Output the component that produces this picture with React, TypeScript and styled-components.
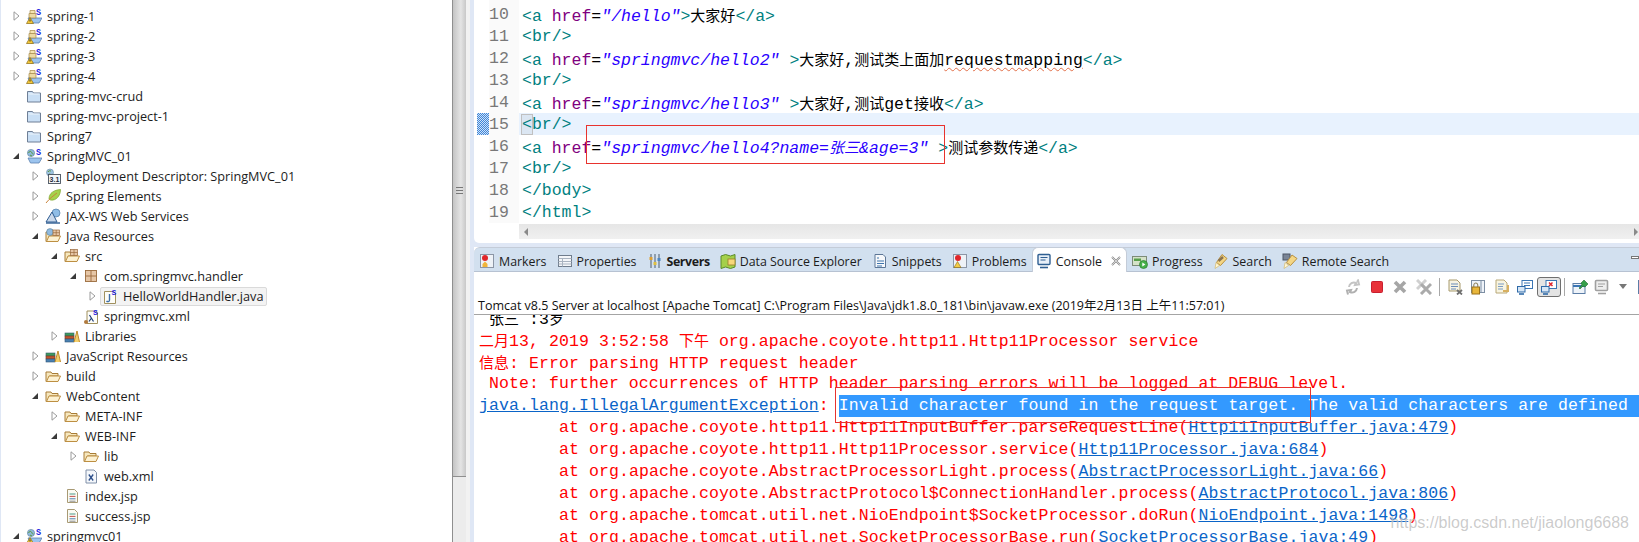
import React from "react";
import styled, { createGlobalStyle } from "styled-components";

const Global = createGlobalStyle`
  html, body { margin: 0; padding: 0; background: #fff; }
`;

const uiFont = `"Open Sans", "Noto Sans CJK SC", sans-serif`;
const monoFont = `"Liberation Mono", "Noto Sans CJK SC", monospace`;

const Screen = styled.div`
  display: flex;
  width: 1639px;
  height: 542px;
  overflow: hidden;
  position: relative;
  background: #fff;
  font-family: ${uiFont};
  font-size: 12px;
  color: #1c1c1c;
`;

/* ---------- project explorer ---------- */
const TreePanel = styled.div`
  width: 452px;
  flex: none;
  padding-top: 6px;
  font-size: 12.7px;
  box-shadow: inset 1px 0 0 #dfe7f5;
`;
const Row = styled.div<{ $level: number }>`
  display: flex;
  align-items: center;
  height: 20px;
  padding-left: ${(p) => 10 + p.$level * 19}px;
`;
const Arrow = styled.span`
  display: flex;
  align-items: center;
  justify-content: center;
  width: 12px;
  height: 12px;
  margin-right: 4px;
  flex: none;
`;
const RowBody = styled.div<{ $selected?: boolean }>`
  display: flex;
  align-items: center;
  height: 19px;
  white-space: nowrap;
  box-sizing: border-box;
  ${(p) =>
    p.$selected &&
    `
    margin-left: -2px;
    padding: 0 3px 0 1px;
    background: #f3f3f3;
    border: 1px solid #dadada;
    border-radius: 2px;
  `}
`;
const RowLabel = styled.span`
  margin-left: 5px;
`;
const IconBox = styled.svg`
  width: 16px;
  height: 16px;
  flex: none;
  display: block;
`;
const TreeScroll = styled.div`
  width: 14px;
  flex: none;
  display: flex;
  flex-direction: column;
  border-left: 1px solid #8f8f8f;
  box-sizing: border-box;
`;
const TreeThumb = styled.div`
  height: 477px;
  display: flex;
  flex-direction: column;
  align-items: center;
  padding-top: 187px;
  box-sizing: border-box;
  background: linear-gradient(to right, #c4c4c4, #e4e4e4 60%, #c8c8c8);
  border-bottom: 1px solid #8f8f8f;
`;
const Grip = styled.div`
  width: 7px;
  height: 7px;
  background: repeating-linear-gradient(to bottom, #777 0 1px, transparent 1px 3px);
`;
const TreeTrackRest = styled.div`
  flex: 1;
  background: #ececec;
`;
const Sash = styled.div`
  width: 8px;
  flex: none;
  background: linear-gradient(to right, #f2f2f2 0 4px, #dfe7f5 4px);
`;

/* ---------- right column ---------- */
const Workbench = styled.div`
  flex: 1;
  min-width: 0;
  display: flex;
  flex-direction: column;
  background: #dfe7f5;
`;
const EditorPane = styled.div`
  height: 243px;
  flex: none;
  background: #fff;
  border-bottom-left-radius: 5px;
  overflow: hidden;
  display: flex;
  flex-direction: column;
`;
const CodeArea = styled.div`
  height: 224px;
  flex: none;
  overflow: hidden;
`;
const CodeLines = styled.div`
  margin-top: -19px;
  font-family: ${monoFont};
  font-size: 16.5px;
  line-height: 22px;
`;
const CodeRow = styled.div`
  display: flex;
  height: 22px;
`;
const Marker = styled.span<{ $on?: boolean }>`
  width: 12px;
  margin-left: 3px;
  flex: none;
  ${(p) =>
    p.$on &&
    `
    background-color: #7fb0e8;
    background-image: repeating-conic-gradient(#3f86d8 0 25%, #cfe2f8 0 50%);
    background-size: 2px 2px;
  `}
`;
const LineNo = styled.span`
  width: 30px;
  height: 22px;
  padding-top: 1px;
  box-sizing: border-box;
  flex: none;
  color: #787878;
  background: #fafafa;
`;
const CodeText = styled.div<{ $active?: boolean }>`
  flex: 1;
  height: 22px;
  padding: 1px 0 0 3px;
  box-sizing: border-box;
  white-space: pre;
  color: #000;
  background: ${(p) => (p.$active ? "#e8f2fe" : "transparent")};
`;
const Tag = styled.span`
  color: #008080;
`;
const BracketMatch = styled.span`
  color: #008080;
  outline: 1px solid #c0c0c0;
  background: #dbe6f2;
`;
const Attr = styled.span`
  color: #7f007f;
`;
const Str = styled.span`
  color: #2a00ff;
  font-style: italic;
`;
const Cjk = styled.span`
  font-family: "Noto Sans CJK SC", sans-serif;
  font-size: 15px;
  letter-spacing: 0;
`;
const Squiggle = styled.span`
  text-decoration: underline wavy #e2704a 1px;
  text-underline-offset: 2px;
`;
const HScroll = styled.div`
  height: 15px;
  margin-left: 45px;
  flex: none;
  background: linear-gradient(to bottom, #e6e6e6, #f0f0f0);
  display: flex;
  align-items: center;
  justify-content: space-between;
  padding: 0 1px 0 5px;
`;
const ScrollArrow = styled.span<{ $dir: "left" | "right" }>`
  width: 0;
  height: 0;
  border-top: 4px solid transparent;
  border-bottom: 4px solid transparent;
  ${(p) =>
    p.$dir === "left" ? "border-right: 4px solid #8a8a8a;" : "border-left: 4px solid #8a8a8a;"}
`;

const PaneGap = styled.div`
  height: 4px;
  flex: none;
`;
const ConsolePane = styled.div`
  flex: 1;
  min-height: 0;
  display: flex;
  flex-direction: column;
  background: #fff;
  overflow: hidden;
`;
const TabBar = styled.div`
  height: 25px;
  flex: none;
  display: flex;
  align-items: stretch;
  background: #d2e0ef;
  border-top: 1px solid #c4ccd8;
  border-bottom: 1px solid #b7c2d2;
  border-top-left-radius: 6px;
  box-sizing: border-box;
  position: relative;
  font-size: 12.4px;
`;
const Tab = styled.div<{ $active?: boolean; $bold?: boolean }>`
  display: flex;
  align-items: center;
  gap: 4px;
  padding: 3px 5px 0;
  white-space: nowrap;
  font-weight: ${(p) => (p.$bold ? 700 : 400)};
  letter-spacing: ${(p) => (p.$bold ? "-0.4px" : "0")};
  ${(p) =>
    p.$active &&
    `
    background: #fff;
    border: 1px solid #c4ccd8;
    border-bottom: none;
    border-radius: 6px 6px 0 0;
    margin: -1px 0 -1px 0;
    padding: 3px 5px 1px 3px;
  `}
`;
const TabClose = styled.span`
  margin-left: 5px;
  width: 10px;
  height: 10px;
  display: flex;
`;
const Minimize = styled.span`
  position: absolute;
  right: 0;
  top: 8px;
  width: 8px;
  height: 3px;
  background: #fff;
  border: 1px solid #777;
  box-sizing: border-box;
`;
const Toolbar = styled.div`
  height: 25px;
  padding-top: 4px;
  box-sizing: border-box;
  flex: none;
  display: flex;
  align-items: center;
  justify-content: flex-end;
  margin-right: -18px;
`;
const ToolSlot = styled.span<{ $w?: number; $on?: boolean }>`
  width: ${(p) => p.$w ?? 23.6}px;
  height: 20px;
  flex: none;
  display: flex;
  align-items: center;
  justify-content: center;
  box-sizing: border-box;
  ${(p) =>
    p.$on &&
    `
    background: #e4e4e4;
    border: 1px solid #6f6f6f;
    border-radius: 3px;
  `}
`;
const ToolSep = styled.span`
  width: 1px;
  height: 18px;
  margin: 0 3px;
  flex: none;
  background: #a8a8a8;
`;
const ConsoleTitle = styled.div`
  height: 17px;
  line-height: 17px;
  font-size: 12.5px;
  flex: none;
  padding-left: 4px;
  color: #111;
  white-space: nowrap;
  border-bottom: 1px solid #a4a4a4;
`;
const ConsoleBody = styled.div`
  flex: 1;
  overflow: hidden;
`;
const ConsoleLines = styled.div`
  margin-top: -8px;
  padding-left: 5px;
  font-family: ${monoFont};
  font-size: 16.5px;
  letter-spacing: 0.09px;
  line-height: 22px;
  color: #ff0000;
  white-space: pre;
`;
const ConsoleLine = styled.div<{ $plain?: boolean }>`
  height: 22px;
  color: ${(p) => (p.$plain ? "#000" : "#ff0000")};
`;
const Trace = styled.span`
  padding-left: 80px;
`;
const JavaLink = styled.span`
  color: #0a64c8;
  text-decoration: underline;
`;
const Selected = styled.span`
  display: inline-block;
  width: 900px;
  height: 22px;
  background: #3399ff;
  color: #fff;
`;

/* ---------- overlays ---------- */
const RedBox = styled.div<{ $x: number; $y: number; $w: number; $h: number }>`
  position: absolute;
  left: ${(p) => p.$x}px;
  top: ${(p) => p.$y}px;
  width: ${(p) => p.$w}px;
  height: ${(p) => p.$h}px;
  border: 1px solid #e8332e;
  box-sizing: border-box;
  pointer-events: none;
`;
const Watermark = styled.div`
  position: absolute;
  right: 10px;
  top: 513px;
  font-family: "Liberation Sans", sans-serif;
  font-size: 16px;
  line-height: 20px;
  color: rgba(130, 130, 130, 0.42);
  text-shadow: 0 0 1px rgba(255, 255, 255, 0.7);
`;

/* ---------- icons ---------- */
const OpenFolder = () => (
  <>
    <path d="M1 4h5l1 1.5h6V8H4.5L2.5 13.5H1z" fill="#f6e7bd" stroke="#a87c36" />
    <path d="M4 8h11.5L13 13.5H1.5z" fill="#fcf1d2" stroke="#bd8f42" />
  </>
);
const SBadge = () => (
  <text x="10" y="7" fontSize="8.5" fontWeight="700" fontFamily="Liberation Mono, monospace" fill="#1a1ae0">
    S
  </text>
);
const Warn = () => (
  <>
    <path d="M4 9.5L7.5 15.5H0.5z" fill="#f5c93a" stroke="#8a6a10" strokeWidth="0.7" />
    <path d="M4 11.5v2" stroke="#222" strokeWidth="0.9" />
  </>
);
const BlueTray = () => <path d="M2 10h14l-3 5H4.5z" fill="#9cc4ee" stroke="#5b82b0" strokeWidth="0.8" />;
const Globe = () => (
  <>
    <circle cx="5" cy="5" r="3.6" fill="#8fbadf" stroke="#5b7f99" strokeWidth="0.6" />
    <path d="M2.5 5c1-2 2-2 3-1s0 2 2 2M4 7l2 1" stroke="#5d9a3c" strokeWidth="1" fill="none" />
  </>
);
const Crate = () => (
  <g stroke="#9a6a3c" strokeWidth="0.9" fill="#e9c9a4">
    <rect x="2.5" y="2.5" width="11" height="11" fill="#e6c6a6" />
    <path d="M2.5 8h11M8 2.5v11" />
  </g>
);
const Books = () => (
  <>
    <rect x="1" y="5" width="9" height="3" fill="#3c9a5c" stroke="#3a5f6e" strokeWidth="0.6" />
    <rect x="1" y="8" width="9" height="3" fill="#c0552c" stroke="#6e3a2a" strokeWidth="0.6" />
    <rect x="1" y="11" width="9" height="3" fill="#4a80b0" stroke="#2e5578" strokeWidth="0.6" />
    <path d="M10 14l3-11 2.5 11" fill="#f3cf6b" stroke="#c08a2a" />
  </>
);
const DocSheet = ({ lines }: { lines: string[] }) => (
  <>
    <path d="M3.5 1.5h7l3 3v10h-10z" fill="#fbfbf4" stroke="#a89a74" />
    {lines.map((c, i) => (
      <path key={i} d={`M5.5 ${6 + i * 2.4}h6`} stroke={c} strokeWidth="1" />
    ))}
  </>
);

const treeArt: Record<string, React.ReactNode> = {
  springWarn: (
    <>
      <path d="M4 2.5h5v3H4z" fill="#f4e3b0" stroke="#a88a4a" strokeWidth="0.7" />
      <BlueTray />
      <path d="M3 5.5h7v4.5H3z" fill="#ecd9a4" stroke="#a88a4a" strokeWidth="0.7" />
      <SBadge />
      <Warn />
    </>
  ),
  springWeb: (
    <>
      <Globe />
      <BlueTray />
      <SBadge />
    </>
  ),
  webWarn: (
    <>
      <Globe />
      <BlueTray />
      <SBadge />
      <Warn />
    </>
  ),
  closed: (
    <>
      <path d="M1.5 3.5h5l1 1.5h7v9h-13z" fill="#c9dff5" stroke="#6f7f96" />
      <path d="M2.5 6h11" stroke="#eef5fc" />
    </>
  ),
  descriptor: (
    <>
      <circle cx="5" cy="4.5" r="3.5" fill="#9cc2e0" stroke="#6a8ca4" strokeWidth="0.6" />
      <path d="M3 4c1-2 2-1 3-1M4 6l2 .5" stroke="#5d9a3c" strokeWidth="1" fill="none" />
      <rect x="3.5" y="6.5" width="12" height="9" fill="#f4f6f9" stroke="#46505c" strokeWidth="0.9" />
      <text x="4.6" y="14" fontSize="7" fontWeight="700" fontFamily="Liberation Sans, sans-serif" fill="#1d2b3a">
        3.1
      </text>
    </>
  ),
  leaf: (
    <>
      <path d="M4 11C4 5 9 2 15.5 1.5 15.5 8 11 13 5.5 12z" fill="#a6d24a" stroke="#7ea82e" strokeWidth="0.7" />
      <path d="M1 15C4 11 8 8 12 5" stroke="#c9843a" strokeWidth="1" fill="none" />
    </>
  ),
  jaxws: (
    <>
      <circle cx="11" cy="5" r="4" fill="#8fbde6" stroke="#4d7ba6" strokeWidth="0.7" />
      <path d="M1 14L7 4l5 10z" fill="#c9d8ea" stroke="#2f5d92" />
      <path d="M1 15h14" stroke="#2f5d92" strokeWidth="1.4" />
    </>
  ),
  javaRes: (
    <>
      <OpenFolder />
      <circle cx="5" cy="4" r="3.4" fill="#8fbadf" stroke="#5b7f99" strokeWidth="0.6" />
      <g stroke="#9a6a3c" strokeWidth="0.7" fill="#e6c6a6">
        <rect x="8" y="2" width="6.5" height="5.5" />
        <path d="M8 4.7h6.5M11.2 2v5.5" />
      </g>
    </>
  ),
  src: (
    <>
      <OpenFolder />
      <g stroke="#9a6a3c" strokeWidth="0.7" fill="#e6c6a6">
        <rect x="6.5" y="1.5" width="7" height="6" />
        <path d="M6.5 4.5h7M10 1.5v6" />
      </g>
    </>
  ),
  pkg: <Crate />,
  java: (
    <>
      <path d="M2.5 3.5h9l2 2v10h-11z" fill="#fdfdf8" stroke="#a0905e" />
      <path d="M7.5 6v6c0 2-2 2-3 1" stroke="#3c6ea8" strokeWidth="1.4" fill="none" />
      <text x="9.5" y="6.5" fontSize="8" fontWeight="700" fontFamily="Liberation Mono, monospace" fill="#1a1ae0">
        S
      </text>
    </>
  ),
  springXml: (
    <>
      <path d="M4 3h9l1.5 1.5v11H4z" fill="#fdfdf8" stroke="#a0905e" />
      <path d="M6.5 7l4 6.5M8.5 10l-2.5 3.5" stroke="#1d3c78" strokeWidth="1.2" fill="none" />
      <circle cx="3" cy="14" r="2" fill="#b07a3e" />
      <text x="10" y="6.5" fontSize="8" fontWeight="700" fontFamily="Liberation Mono, monospace" fill="#1a1ae0">
        S
      </text>
    </>
  ),
  libs: <Books />,
  folder: <OpenFolder />,
  xml: (
    <>
      <path d="M3 2h8l2.5 2.5V15H3z" fill="#f4f7fb" stroke="#8090a8" />
      <path d="M5.8 6.5l4.4 6M10.2 6.5l-4.4 6" stroke="#2d4f8a" strokeWidth="1.3" />
    </>
  ),
  jsp: <DocSheet lines={["#4d9a8a", "#c05050", "#4d7fb0", "#8a8a8a"]} />,
};

const ClosedArrow = () => (
  <svg width="7" height="10" viewBox="0 0 7 10">
    <path d="M1 .8L6 5 1 9.2z" fill="#fff" stroke="#9a9a9a" />
  </svg>
);
const OpenArrow = () => (
  <svg width="8" height="8" viewBox="0 0 8 8">
    <path d="M7 1v6H1z" fill="#3a3a3a" />
  </svg>
);

type TreeItem = {
  label: string;
  level: number;
  icon: string;
  arrow?: "open" | "closed";
  selected?: boolean;
};

const treeItems: TreeItem[] = [
  { label: "spring-1", level: 0, icon: "springWarn", arrow: "closed" },
  { label: "spring-2", level: 0, icon: "springWarn", arrow: "closed" },
  { label: "spring-3", level: 0, icon: "springWarn", arrow: "closed" },
  { label: "spring-4", level: 0, icon: "springWarn", arrow: "closed" },
  { label: "spring-mvc-crud", level: 0, icon: "closed" },
  { label: "spring-mvc-project-1", level: 0, icon: "closed" },
  { label: "Spring7", level: 0, icon: "closed" },
  { label: "SpringMVC_01", level: 0, icon: "springWeb", arrow: "open" },
  { label: "Deployment Descriptor: SpringMVC_01", level: 1, icon: "descriptor", arrow: "closed" },
  { label: "Spring Elements", level: 1, icon: "leaf", arrow: "closed" },
  { label: "JAX-WS Web Services", level: 1, icon: "jaxws", arrow: "closed" },
  { label: "Java Resources", level: 1, icon: "javaRes", arrow: "open" },
  { label: "src", level: 2, icon: "src", arrow: "open" },
  { label: "com.springmvc.handler", level: 3, icon: "pkg", arrow: "open" },
  { label: "HelloWorldHandler.java", level: 4, icon: "java", arrow: "closed", selected: true },
  { label: "springmvc.xml", level: 3, icon: "springXml" },
  { label: "Libraries", level: 2, icon: "libs", arrow: "closed" },
  { label: "JavaScript Resources", level: 1, icon: "libs", arrow: "closed" },
  { label: "build", level: 1, icon: "folder", arrow: "closed" },
  { label: "WebContent", level: 1, icon: "folder", arrow: "open" },
  { label: "META-INF", level: 2, icon: "folder", arrow: "closed" },
  { label: "WEB-INF", level: 2, icon: "folder", arrow: "open" },
  { label: "lib", level: 3, icon: "folder", arrow: "closed" },
  { label: "web.xml", level: 3, icon: "xml" },
  { label: "index.jsp", level: 2, icon: "jsp" },
  { label: "success.jsp", level: 2, icon: "jsp" },
  { label: "springmvc01", level: 0, icon: "webWarn", arrow: "open" },
];

const tabArt: Record<string, React.ReactNode> = {
  markers: (
    <>
      <rect x="1.5" y="1.5" width="13" height="13" fill="#eef2f7" stroke="#8c96a6" />
      <circle cx="6" cy="5" r="3" fill="#e0262a" />
      <path d="M3.5 14V11l2.5-2.5L8.5 11v3z" fill="#f0b43a" />
    </>
  ),
  properties: (
    <>
      <rect x="1.5" y="2.5" width="13" height="11" fill="#f4f6f9" stroke="#6f7c8c" />
      <path d="M1.5 5.5h13M1.5 8.5h13M1.5 11h13M5.5 5.5v8" stroke="#a9b3c0" />
    </>
  ),
  servers: (
    <>
      <path d="M4 1v14M8 1v14M12 1v14" stroke="#4c5c6c" />
      <rect x="2.5" y="4" width="3" height="3" fill="#e0a030" />
      <rect x="6.5" y="9" width="3" height="3" fill="#e0c040" />
      <rect x="10.5" y="5" width="3" height="3" fill="#4d86c0" />
    </>
  ),
  datasource: (
    <>
      <path d="M1 3l4.5-1.5L10.5 3 15 1.5V14l-4.5 1.5L5.5 14 1 15.5z" fill="#a4d04a" stroke="#5a8a2a" />
      <rect x="8" y="6" width="7" height="6" fill="#f7d87a" stroke="#9a7a2a" strokeWidth="0.8" />
    </>
  ),
  snippets: (
    <>
      <path d="M3 1.5h8l2.5 2.5v10.5H3z" fill="#f6f8fb" stroke="#5c7696" />
      <path d="M5 5h2M5 8h7M5 10.5h7M5 13h5" stroke="#3f74ab" />
    </>
  ),
  problems: (
    <>
      <rect x="1.5" y="1.5" width="13" height="13" fill="#eef2f7" stroke="#8c96a6" />
      <circle cx="6" cy="5" r="3" fill="#e0262a" />
      <path d="M5.5 8.5L9 14.5H2z" fill="#f3cc46" stroke="#8a6a10" strokeWidth="0.6" />
    </>
  ),
  console: (
    <>
      <rect x="2" y="1.5" width="12" height="10" rx="1" fill="#e7eff8" stroke="#2f5f92" strokeWidth="1.4" />
      <path d="M4.5 4.5h7M4.5 7h5" stroke="#2f5f92" />
      <path d="M4 14.5h8" stroke="#2f5f92" strokeWidth="1.6" />
    </>
  ),
  progress: (
    <>
      <rect x="0.5" y="3.5" width="14" height="9" fill="#d4e2c8" stroke="#7d8c78" />
      <rect x="2" y="5.5" width="7" height="2.5" fill="#58a04a" />
      <circle cx="11.5" cy="11.5" r="4" fill="#46b04a" stroke="#2f7d32" strokeWidth="0.7" />
      <path d="M10.3 9.5v4l3-2z" fill="#fff" />
    </>
  ),
  search: (
    <>
      <path d="M9 1.5l5 4-6.5 7-4-3z" fill="#f4d685" stroke="#b89040" />
      <path d="M5.5 8L10 4" stroke="#8a7350" strokeWidth="2.4" />
      <path d="M3 9.5l3.5 3L2 15.5z" fill="#fff6d2" stroke="#d0b060" strokeWidth="0.6" />
    </>
  ),
  remote: (
    <>
      <rect x="1" y="1" width="7" height="6" fill="#7a8596" stroke="#4c5666" />
      <path d="M10 2l5 3.5-6.5 7-4-3z" fill="#f4d685" stroke="#b89040" />
      <path d="M3 9.5l3.5 3L2 15.5z" fill="#fff6d2" stroke="#d0b060" strokeWidth="0.6" />
    </>
  ),
};

const toolArt: Record<string, React.ReactNode> = {
  sync: (
    <>
      <path d="M4 8a5 5 0 0 1 7-4l-1 2 4-.5-1-4-1 1.5" fill="none" stroke="#c4c4c4" strokeWidth="2" />
      <path d="M12 9a5 5 0 0 1-7 4l1-2-4 .5 1 4" fill="none" stroke="#b0b0b0" strokeWidth="2" />
    </>
  ),
  stop: <rect x="2.5" y="2.5" width="11" height="11" rx="1" fill="#e8323a" stroke="#c82030" />,
  remove: <path d="M3 3l10 10M13 3L3 13" stroke="#a6a6a6" strokeWidth="3.6" />,
  removeAll: (
    <>
      <path d="M1 1l9 9M10 1l-9 9" stroke="#d0d0d0" strokeWidth="3" />
      <path d="M5 5l10 10M15 5L5 15" stroke="#aaaaaa" strokeWidth="3" />
    </>
  ),
  clear: (
    <>
      <path d="M2 1h8l3 3v8H2z" fill="#f6f4e4" stroke="#a89a6c" />
      <path d="M4 5h7M4 7.5h7M4 10h5" stroke="#6b8db8" />
      <path d="M10 11l5 4.5M15 11l-5 4.5" stroke="#707070" strokeWidth="1.8" />
    </>
  ),
  lock: (
    <>
      <rect x="1.5" y="1.5" width="13" height="12" fill="#eef3f9" stroke="#7d8ea3" />
      <path d="M11 1.5v12" stroke="#7d8ea3" />
      <rect x="2" y="8" width="7.5" height="7" fill="#e8b63a" stroke="#9a7018" />
      <path d="M3.8 8V6a2 2 0 0 1 4 0v2" fill="none" stroke="#8a7a50" />
    </>
  ),
  word: (
    <>
      <path d="M2 1h8l3 3v10H2z" fill="#f8f4e0" stroke="#b8a878" />
      <path d="M4 5h6M4 7.5h5M4 10h5" stroke="#7a9cc4" />
      <path d="M9 12h5V6" fill="none" stroke="#d8b060" strokeWidth="2" />
    </>
  ),
  stdout: (
    <>
      <rect x="5" y="1.5" width="10.5" height="8" fill="#fff" stroke="#3c76b4" />
      <path d="M7 4h6M7 6.5h6" stroke="#3c76b4" />
      <rect x="0.5" y="7.5" width="7.5" height="5.5" fill="#d6e6f6" stroke="#2f6aa8" />
      <path d="M2 15h5" stroke="#2f6aa8" strokeWidth="1.6" />
    </>
  ),
  stderr: (
    <>
      <rect x="5" y="1.5" width="10.5" height="8" fill="#fff" stroke="#3c76b4" />
      <path d="M8 3.5l3.5 3.5M11.5 3.5L8 7" stroke="#e02830" strokeWidth="1.5" />
      <rect x="0.5" y="7.5" width="7.5" height="5.5" fill="#d6e6f6" stroke="#2f6aa8" />
      <path d="M2 15h5" stroke="#2f6aa8" strokeWidth="1.6" />
    </>
  ),
  pin: (
    <>
      <rect x="1" y="4.5" width="12" height="10" fill="#eef3f9" stroke="#5b7da6" />
      <path d="M1 7h12" stroke="#3c76b4" strokeWidth="2" />
      <path d="M7 9l3-3-1-2 3-3 4 4-3 3-2-1-3 3z" fill="#35a04a" stroke="#206a30" strokeWidth="0.6" />
    </>
  ),
  monitor: (
    <>
      <rect x="1.5" y="1.5" width="12" height="10" rx="1" fill="#eeeeee" stroke="#a0a0a0" strokeWidth="1.6" />
      <path d="M4 5h7M4 7.5h5" stroke="#a0a0a0" />
      <path d="M4 14.5h8" stroke="#a0a0a0" strokeWidth="1.6" />
    </>
  ),
  doc: <rect x="1.5" y="1.5" width="13" height="13" fill="#f4e9c4" stroke="#5b7da6" />,
};

const Icon = ({ art }: { art: React.ReactNode }) => <IconBox viewBox="0 0 16 16">{art}</IconBox>;

const tabs = [
  { key: "markers", label: "Markers" },
  { key: "properties", label: "Properties" },
  { key: "servers", label: "Servers", bold: true },
  { key: "datasource", label: "Data Source Explorer" },
  { key: "snippets", label: "Snippets" },
  { key: "problems", label: "Problems" },
  { key: "console", label: "Console", active: true },
  { key: "progress", label: "Progress" },
  { key: "search", label: "Search" },
  { key: "remote", label: "Remote Search" },
];

const T = ({ children }: { children: React.ReactNode }) => <Tag>{children}</Tag>;

const codeLines: { no: number; active?: boolean; body: React.ReactNode }[] = [
  { no: 9, body: <T>&lt;body&gt;</T> },
  {
    no: 10,
    body: (
      <>
        <T>&lt;a </T><Attr>href</Attr>=<Str>"/hello"</Str><T>&gt;</T><Cjk>大家好</Cjk><T>&lt;/a&gt;</T>
      </>
    ),
  },
  { no: 11, body: <T>&lt;br/&gt;</T> },
  {
    no: 12,
    body: (
      <>
        <T>&lt;a </T><Attr>href</Attr>=<Str>"springmvc/hello2"</Str> <T>&gt;</T><Cjk>大家好</Cjk>,<Cjk>测试类上面加</Cjk>
        <Squiggle>requestmapping</Squiggle><T>&lt;/a&gt;</T>
      </>
    ),
  },
  { no: 13, body: <T>&lt;br/&gt;</T> },
  {
    no: 14,
    body: (
      <>
        <T>&lt;a </T><Attr>href</Attr>=<Str>"springmvc/hello3"</Str> <T>&gt;</T><Cjk>大家好</Cjk>,<Cjk>测试</Cjk>get<Cjk>接收</Cjk>
        <T>&lt;/a&gt;</T>
      </>
    ),
  },
  {
    no: 15,
    active: true,
    body: (
      <>
        <BracketMatch>&lt;</BracketMatch><T>br/&gt;</T>
      </>
    ),
  },
  {
    no: 16,
    body: (
      <>
        <T>&lt;a </T><Attr>href</Attr>=<Str>"springmvc/hello4?name=<Cjk>张三</Cjk>&amp;age=3"</Str> <T>&gt;</T><Cjk>测试参数传递</Cjk>
        <T>&lt;/a&gt;</T>
      </>
    ),
  },
  { no: 17, body: <T>&lt;br/&gt;</T> },
  { no: 18, body: <T>&lt;/body&gt;</T> },
  { no: 19, body: <T>&lt;/html&gt;</T> },
];

const traces: [string, string][] = [
  ["org.apache.coyote.http11.Http11InputBuffer.parseRequestLine", "Http11InputBuffer.java:479"],
  ["org.apache.coyote.http11.Http11Processor.service", "Http11Processor.java:684"],
  ["org.apache.coyote.AbstractProcessorLight.process", "AbstractProcessorLight.java:66"],
  ["org.apache.coyote.AbstractProtocol$ConnectionHandler.process", "AbstractProtocol.java:806"],
  ["org.apache.tomcat.util.net.NioEndpoint$SocketProcessor.doRun", "NioEndpoint.java:1498"],
  ["org.apache.tomcat.util.net.SocketProcessorBase.run", "SocketProcessorBase.java:49"],
];

const App = () => (
  <Screen>
    <Global />
    <TreePanel>
      {treeItems.map((item) => (
        <Row key={item.label} $level={item.level}>
          <Arrow>
            {item.arrow === "closed" && <ClosedArrow />}
            {item.arrow === "open" && <OpenArrow />}
          </Arrow>
          <RowBody $selected={item.selected}>
            <Icon art={treeArt[item.icon]} />
            <RowLabel>{item.label}</RowLabel>
          </RowBody>
        </Row>
      ))}
    </TreePanel>
    <TreeScroll>
      <TreeThumb>
        <Grip />
      </TreeThumb>
      <TreeTrackRest />
    </TreeScroll>
    <Sash />
    <Workbench>
      <EditorPane>
        <CodeArea>
          <CodeLines>
            {codeLines.map((line) => (
              <CodeRow key={line.no}>
                <Marker $on={line.active} />
                <LineNo>{line.no}</LineNo>
                <CodeText $active={line.active}>{line.body}</CodeText>
              </CodeRow>
            ))}
          </CodeLines>
        </CodeArea>
        <HScroll>
          <ScrollArrow $dir="left" />
          <ScrollArrow $dir="right" />
        </HScroll>
      </EditorPane>
      <PaneGap />
      <ConsolePane>
        <TabBar>
          {tabs.map((tab) => (
            <Tab key={tab.key} $active={tab.active} $bold={tab.bold}>
              <Icon art={tabArt[tab.key]} />
              {tab.label}
              {tab.active && (
                <TabClose>
                  <svg width="10" height="10" viewBox="0 0 10 10">
                    <path d="M1 1l8 8M9 1L1 9" stroke="#8a8a8a" strokeWidth="1.8" />
                    <path d="M1 1l8 8M9 1L1 9" stroke="#fff" strokeWidth="0.6" />
                  </svg>
                </TabClose>
              )}
            </Tab>
          ))}
          <Minimize />
        </TabBar>
        <Toolbar>
          <ToolSlot><Icon art={toolArt.sync} /></ToolSlot>
          <ToolSlot><Icon art={toolArt.stop} /></ToolSlot>
          <ToolSlot><Icon art={toolArt.remove} /></ToolSlot>
          <ToolSlot><Icon art={toolArt.removeAll} /></ToolSlot>
          <ToolSep />
          <ToolSlot><Icon art={toolArt.clear} /></ToolSlot>
          <ToolSlot><Icon art={toolArt.lock} /></ToolSlot>
          <ToolSlot><Icon art={toolArt.word} /></ToolSlot>
          <ToolSlot><Icon art={toolArt.stdout} /></ToolSlot>
          <ToolSlot $on><Icon art={toolArt.stderr} /></ToolSlot>
          <ToolSep />
          <ToolSlot><Icon art={toolArt.pin} /></ToolSlot>
          <ToolSlot $w={22}><Icon art={toolArt.monitor} /></ToolSlot>
          <ToolSlot $w={20}>
            <svg width="8" height="5" viewBox="0 0 8 5"><path d="M0 0h8L4 5z" fill="#777" /></svg>
          </ToolSlot>
          <ToolSlot><Icon art={toolArt.doc} /></ToolSlot>
        </Toolbar>
        <ConsoleTitle>
          Tomcat v8.5 Server at localhost [Apache Tomcat] C:\Program Files\Java\jdk1.8.0_181\bin\javaw.exe (2019年2月13日 上午11:57:01)
        </ConsoleTitle>
        <ConsoleBody>
          <ConsoleLines>
            <ConsoleLine $plain> <Cjk>张三</Cjk> :3<Cjk>岁</Cjk></ConsoleLine>
            <ConsoleLine><Cjk>二月</Cjk>13, 2019 3:52:58 <Cjk>下午</Cjk> org.apache.coyote.http11.Http11Processor service</ConsoleLine>
            <ConsoleLine><Cjk>信息</Cjk>: Error parsing HTTP request header</ConsoleLine>
            <ConsoleLine> Note: further occurrences of HTTP header parsing errors will be logged at DEBUG level.</ConsoleLine>
            <ConsoleLine>
              <JavaLink>java.lang.IllegalArgumentException</JavaLink>: <Selected>Invalid character found in the request target. The valid characters are defined</Selected>
            </ConsoleLine>
            {traces.map(([where, file]) => (
              <ConsoleLine key={file}>
                <Trace>at {where}(<JavaLink>{file}</JavaLink>)</Trace>
              </ConsoleLine>
            ))}
          </ConsoleLines>
        </ConsoleBody>
      </ConsolePane>
    </Workbench>
    <RedBox $x={586} $y={125} $w={359} $h={39} />
    <RedBox $x={835} $y={387} $w={476} $h={36} />
    <Watermark>https://blog.csdn.net/jiaolong6688</Watermark>
  </Screen>
);

export default App;
